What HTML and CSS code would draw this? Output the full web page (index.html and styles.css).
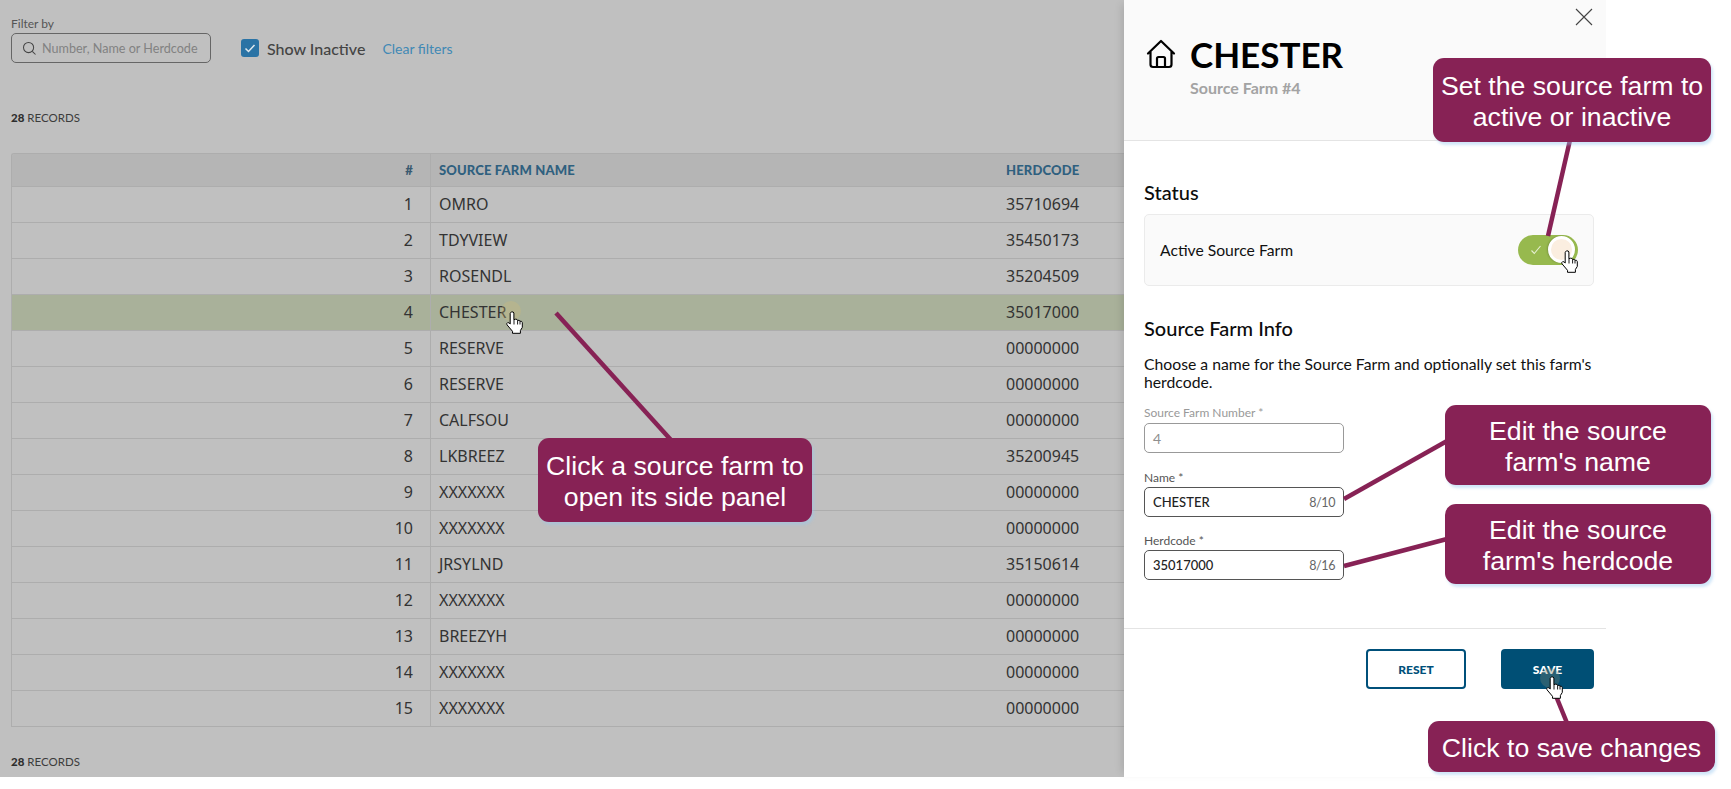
FILE: index.html
```html
<!DOCTYPE html>
<html lang="en">
<head>
<meta charset="utf-8">
<title>Source Farms</title>
<link rel="stylesheet" href="styles.css">
</head>
<body>
<svg class="defs" width="0" height="0" aria-hidden="true">
  <symbol id="hand" viewBox="0 0 17 23">
    <path d="M5.5 1Q7.5 .3 7.9 2V8.6L9.6 8.2Q11.3 8 11.6 9.4Q13.4 8.8 14 10.2Q15.9 9.8 16.3 11.6V16.4L14.4 19.5V22.3H6.5V20.3L1 13.8Q.2 12.4 1.6 11.7Q3 11.2 4.2 13V2.4Q4.3 1.4 5.5 1Z" fill="#fff" stroke="#000" stroke-width="1" stroke-linejoin="round"/>
    <path d="M8 8.5V13.5M11.6 9.4V13.5M14 10.2V13.5" fill="none" stroke="#000" stroke-width=".9"/>
  </symbol>
</svg>
<div class="app">
  <main class="main">
    <div class="filter-label">Filter by</div>
    <div class="filters">
      <div class="search">
        <svg class="search-icon" viewBox="0 0 16 16"><circle cx="7" cy="7" r="5.4" fill="none" stroke="#444" stroke-width="1.1"/><path d="M11 11l3.4 3.4" stroke="#444" stroke-width="1.1"/></svg>
        <span class="placeholder">Number, Name or Herdcode</span>
      </div>
      <span class="checkbox"><svg viewBox="0 0 18 18"><path d="M4.5 9.5l3 3 6-6.5" fill="none" stroke="#dfe9ef" stroke-width="1.5"/></svg></span>
      <span class="show-inactive">Show Inactive</span>
      <a class="clear">Clear filters</a>
    </div>
    <div class="records records-top"><b>28</b> RECORDS</div>
    <div class="table-wrap">
      <table class="grid">
        <colgroup><col class="c1"><col class="c2"><col class="c3"></colgroup>
        <thead><tr><th class="num">#</th><th>SOURCE FARM NAME</th><th>HERDCODE</th></tr></thead>
        <tbody>
          <tr><td class="num">1</td><td>OMRO</td><td>35710694</td></tr>
          <tr><td class="num">2</td><td>TDYVIEW</td><td>35450173</td></tr>
          <tr><td class="num">3</td><td>ROSENDL</td><td>35204509</td></tr>
          <tr class="selected"><td class="num">4</td><td>CHESTER</td><td>35017000</td></tr>
          <tr><td class="num">5</td><td>RESERVE</td><td>00000000</td></tr>
          <tr><td class="num">6</td><td>RESERVE</td><td>00000000</td></tr>
          <tr><td class="num">7</td><td>CALFSOU</td><td>00000000</td></tr>
          <tr><td class="num">8</td><td>LKBREEZ</td><td>35200945</td></tr>
          <tr><td class="num">9</td><td>XXXXXXX</td><td>00000000</td></tr>
          <tr><td class="num">10</td><td>XXXXXXX</td><td>00000000</td></tr>
          <tr><td class="num">11</td><td>JRSYLND</td><td>35150614</td></tr>
          <tr><td class="num">12</td><td>XXXXXXX</td><td>00000000</td></tr>
          <tr><td class="num">13</td><td>BREEZYH</td><td>00000000</td></tr>
          <tr><td class="num">14</td><td>XXXXXXX</td><td>00000000</td></tr>
          <tr><td class="num">15</td><td>XXXXXXX</td><td>00000000</td></tr>
        </tbody>
      </table>
    </div>
    <div class="records records-bottom"><b>28</b> RECORDS</div>
  </main>

  <aside class="panel">
    <header class="panel-head">
      <svg class="close" viewBox="0 0 18 18"><path d="M1 1l16 16M17 1L1 17" stroke="#444" stroke-width="1.1" fill="none"/></svg>
      <div class="title-row">
        <svg class="house" viewBox="0 0 30 30"><path d="M2 14.5L15 2l13 12.5M4.5 12.5V25.5q0 2.5 2.5 2.5h16q2.500 0 2.500-2.500V12.500" fill="none" stroke="#000" stroke-width="2.200" stroke-linecap="round" stroke-linejoin="round"/><path d="M11 28v-8.500q0-1.500 1.500-1.500h5q1.500 0 1.500 1.500V28" fill="none" stroke="#000" stroke-width="2.200"/></svg>
        <h1 class="title">CHESTER</h1>
      </div>
      <div class="subtitle">Source Farm #4</div>
    </header>
    <section class="panel-body">
      <h2 class="section-title status-title">Status</h2>
      <div class="status-card">
        <span>Active Source Farm</span>
        <span class="toggle">
          <svg class="toggle-check" viewBox="0 0 12 12"><path d="M1.500 6.500l2.800 3L10.500 2" fill="none" stroke="#e6efd2" stroke-width="1.100"/></svg>
          <span class="knob"></span>
        </span>
      </div>
      <h2 class="section-title info-title">Source Farm Info</h2>
      <p class="help">Choose a name for the Source Farm and optionally set this farm's herdcode.</p>
      <label class="field-label disabled first">Source Farm Number *</label>
      <div class="input disabled-input"><span>4</span></div>
      <label class="field-label second">Name *</label>
      <div class="input"><span class="val">CHESTER</span><span class="count">8/10</span></div>
      <label class="field-label third">Herdcode *</label>
      <div class="input"><span class="val">35017000</span><span class="count">8/16</span></div>
    </section>
    <footer class="panel-foot">
      <button class="btn btn-outline">RESET</button>
      <button class="btn btn-solid">SAVE</button>
    </footer>
  </aside>
</div>

<svg class="connectors" width="1731" height="789" viewBox="0 0 1731 789">
  <g stroke="#872255" stroke-width="4.500" fill="none">
    <path d="M556 313L671 440"/>
    <path d="M1570 140L1548 236"/>
    <path d="M1447 441L1344 499"/>
    <path d="M1447 539L1344 566"/>
    <path d="M1556 696L1567 723"/>
  </g>
</svg>
<div class="click-dot dot-row"></div>
<div class="click-dot dot-save"></div>
<svg class="hand hand-row"><use href="#hand"/></svg>
<svg class="hand hand-toggle"><use href="#hand"/></svg>
<svg class="hand hand-save"><use href="#hand"/></svg>
<div class="callout c-click">Click a source farm to<br>open its side panel</div>
<div class="callout c-active">Set the source farm to<br>active or inactive</div>
<div class="callout c-name">Edit the source<br>farm's name</div>
<div class="callout c-herd">Edit the source<br>farm's herdcode</div>
<div class="callout c-save">Click to save changes</div>
</body>
</html>
```

FILE: styles.css
```css
* { box-sizing: border-box; }
html, body { margin: 0; padding: 0; }
body {
  position: relative;
  width: 1731px;
  height: 789px;
  overflow: hidden;
  background: #fff;
  font-family: "Lato", "Liberation Sans", sans-serif;
  color: #333;
}
.defs { position: absolute; }
.app { display: flex; width: 1606px; height: 777px; }

/* main */
.main { width: 1124px; flex: none; background: #c0c0c0; padding: 16px 0 0 11px; }
.filter-label { font-size: 12px; line-height: 16px; color: #555; }
.filters { display: flex; align-items: center; height: 30px; margin-top: 1px; }
.search {
  width: 200px; height: 30px; border: 1px solid #666; border-radius: 5px;
  display: flex; align-items: center; padding-left: 10px; gap: 5px;
}
.search-icon { width: 15px; height: 15px; flex: none; }
.placeholder { font-size: 12.6px; color: #828282; white-space: nowrap; }
.checkbox {
  width: 18px; height: 18px; border-radius: 3px; background: #2a73a5;
  margin-left: 30px; display: block;
}
.checkbox svg { display: block; width: 18px; height: 18px; }
.show-inactive { margin-left: 8px; font-size: 16px; font-weight: 500; color: #444; }
.clear { margin-left: 17px; font-size: 14px; color: #4189b5; }
.records { font-size: 11.5px; line-height: 16px; color: #3c3c3c; }
.records b { font-weight: 900; color: #2e2e2e; }
.records-top { margin-top: 47px; }
.records-bottom { margin-top: 27px; }
.table-wrap {
  margin-top: 27px; width: 1113px;
  border-top: 1px solid #adadad; border-left: 1px solid #adadad; border-top-left-radius: 3px;
  overflow: hidden;
}
.grid { border-collapse: separate; border-spacing: 0; table-layout: fixed; width: 1112px; }
.c1 { width: 419px; }
.c2 { width: 567px; }
.grid th, .grid td { border-bottom: 1px solid #adadad; padding: 0 8px; text-align: left; }
.grid th {
  height: 33px; background: #b5b5b5; font-size: 13px; font-weight: 900; color: #2f607f;
  font-family: "Lato", sans-serif; letter-spacing: .15px;
}
.grid td {
  height: 36px; padding-bottom: 2px; font-family: "Noto Sans", sans-serif; font-size: 16px; color: #333;
}
.grid th.num, .grid td.num { text-align: right; padding-right: 17px; border-right: 1px solid #adadad; }
.grid th.num { color: #3a5a70; }
.selected td { background: #a9b19a; }

/* panel */
.panel {
  width: 482px; flex: none; background: #fff; position: relative;
  box-shadow: -6px 0 8px -4px rgba(0,0,0,.12);
  color: #111;
}
.panel-head { height: 141px; background: #fafafa; border-bottom: 1px solid #e4e4e4; padding: 36px 0 0 22px; }
.close { position: absolute; top: 8px; left: 451px; width: 18px; height: 18px; }
.title-row { display: flex; align-items: center; gap: 14px; height: 36px; }
.house { width: 30px; height: 30px; flex: none; }
.title { margin: 0; font-size: 35px; line-height: 36px; font-weight: 700; color: #000; }
.subtitle { margin: 6px 0 0 44px; font-size: 16px; line-height: 20px; font-weight: 700; color: #a3a3a3; }
.panel-body { padding: 0 12px 0 20px; }
.section-title { margin: 0; font-size: 20px; line-height: 24px; font-weight: 500; color: #0c0c0c; }
.status-title { margin-top: 39px; }
.status-card {
  margin-top: 10px; height: 72px; border: 1px solid #ebebeb; border-radius: 5px; background: #fafafa;
  display: flex; align-items: center; justify-content: space-between;
  padding: 0 15px 0 15px; font-size: 15.7px;
}
.toggle { position: relative; display: block; width: 60px; height: 30px; border-radius: 15px; background: #97b94e; }
.toggle-check { position: absolute; left: 12px; top: 9px; width: 12px; height: 12px; }
.knob {
  position: absolute; right: 3px; top: 1px; width: 27px; height: 27px; border-radius: 50%;
  background: #fbeee0; border: 3px solid #fff; box-shadow: -1px 0 2px rgba(0,0,0,.18);
}
.info-title { margin-top: 30px; }
.help { margin: 15px 0 0; font-size: 15.75px; line-height: 18px; color: #111; }
.field-label { display: block; font-size: 12px; line-height: 16px; color: #555; }
.field-label.disabled { color: #999; }
.first { margin-top: 14px; }
.second { margin-top: 17px; }
.third { margin-top: 16px; }
.input {
  width: 200px; height: 30px; border: 1px solid #555; border-radius: 5px; margin-top: 1px;
  display: flex; align-items: center; justify-content: space-between; padding: 0 8px;
  font-size: 13px; color: #333; background: #fff;
}
.disabled-input { border-color: #999; color: #8f8f8f; margin-top: 2px; font-size: 14px; }
.val { font-weight: 500; color: #222; }
.count { color: #666; font-size: 12.5px; letter-spacing: -.4px; }
.panel-foot {
  margin-top: 48px; border-top: 1px solid #e4e4e4; padding: 20px 12px 0 0;
  display: flex; justify-content: flex-end; gap: 35px;
}
.btn {
  height: 40px; border-radius: 4px; font-family: inherit; font-size: 12px; font-weight: 900; padding: 0;
}
.btn-outline { width: 100px; background: #fff; border: 2px solid #00507a; color: #00507a; }
.btn-solid { width: 93px; background: #004f75; border: 2px solid #004f75; color: #fff; }

/* annotations */
.connectors { position: absolute; left: 0; top: 0; pointer-events: none; }
.click-dot { position: absolute; width: 20px; height: 20px; border-radius: 50%; }
.dot-row { left: 501px; top: 301px; background: rgba(210,190,120,.3); }
.dot-save { left: 1540px; top: 668px; background: rgba(120,130,110,.35); }
.hand { position: absolute; width: 17px; height: 23px; }
.hand-row { left: 506px; top: 311px; }
.hand-toggle { left: 1561px; top: 250px; }
.hand-save { left: 1546px; top: 676px; }
.callout {
  position: absolute; display: flex; align-items: center; justify-content: center; text-align: center;
  background: #872255; color: #fff; border-radius: 11px; padding-top: 3px;
  font-family: "Liberation Sans", Arial, sans-serif; font-size: 26.67px; line-height: 31px;
  box-shadow: 2px 3px 3px rgba(150,200,240,.45); white-space: nowrap;
}
.c-click { left: 538px; top: 438px; width: 274px; height: 84px; }
.c-active { left: 1433px; top: 58px; width: 278px; height: 84px; }
.c-name { left: 1445px; top: 405px; width: 266px; height: 80px; }
.c-herd { left: 1445px; top: 504px; width: 266px; height: 80px; }
.c-save { left: 1428px; top: 721px; width: 287px; height: 51px; }
```
